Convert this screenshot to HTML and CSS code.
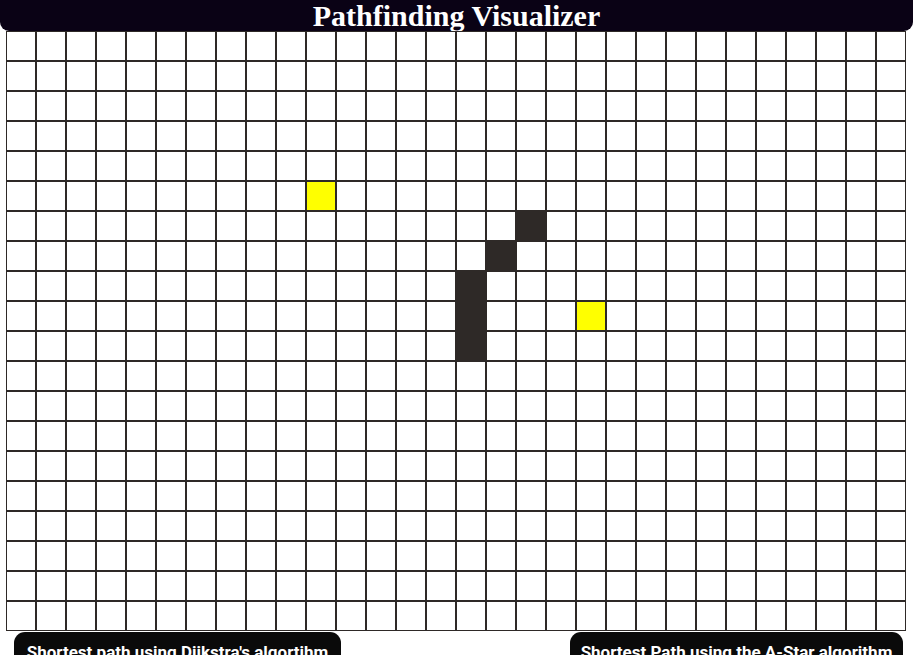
FILE: index.html
```html
<!DOCTYPE html>
<html>
<head>
<meta charset="utf-8">
<link rel="stylesheet" href="styles.css">
</head>
<body>
<header class="header"><h1 class="title">Pathfinding Visualizer</h1></header>
<div class="grid" id="grid"></div>
<div class="actions">
  <button class="btn">Shortest path using Dijkstra's algortihm</button>
  <button class="btn btn-right">Shortest Path using the A-Star algorithm</button>
</div>
<script src="script.js"></script>
</body>
</html>
```
FILE: styles.css
```css
html, body {
  margin: 0;
  padding: 0;
  background: #ffffff;
  overflow: hidden;
}
.header {
  height: 31px;
  background: #0a0215;
  border-radius: 0 0 9px 9px;
  display: flex;
  align-items: center;
  justify-content: center;
}
.title {
  margin: 0;
  color: #ffffff;
  font-family: "Liberation Serif", "Times New Roman", serif;
  font-weight: bold;
  font-size: 30px;
  line-height: 31px;
}
.grid {
  margin-left: 6px;
  width: 900px;
  display: grid;
  grid-template-columns: repeat(30, 30px);
  grid-auto-rows: 30px;
}
.cell {
  box-sizing: border-box;
  border: 1px solid #2e2927;
  background: #ffffff;
}
.cell.wall { background: #2e2927; }
.cell.node { background: #ffff00; }
.actions {
  display: flex;
  justify-content: space-between;
  padding: 1px 10px 0 14px;
}
.btn {
  background: #0a0a0a;
  color: #ffffff;
  border: none;
  border-radius: 11px;
  font-family: Roboto, "Liberation Sans", Arial, sans-serif;
  font-weight: bold;
  font-size: 17px;
  padding: 10px 6px;
  width: 327px;
  text-align: center;
  white-space: nowrap;
}
.btn-right { width: 333px; }
```
FILE: script.js
```js
var grid = document.getElementById('grid');
var walls = {'17,6':1,'16,7':1,'15,8':1,'15,9':1,'15,10':1};
var nodes = {'10,5':1,'19,9':1};
for (var r = 0; r < 20; r++) {
  for (var c = 0; c < 30; c++) {
    var d = document.createElement('div');
    var k = c + ',' + r;
    d.className = 'cell' + (walls[k] ? ' wall' : '') + (nodes[k] ? ' node' : '');
    grid.appendChild(d);
  }
}
```
